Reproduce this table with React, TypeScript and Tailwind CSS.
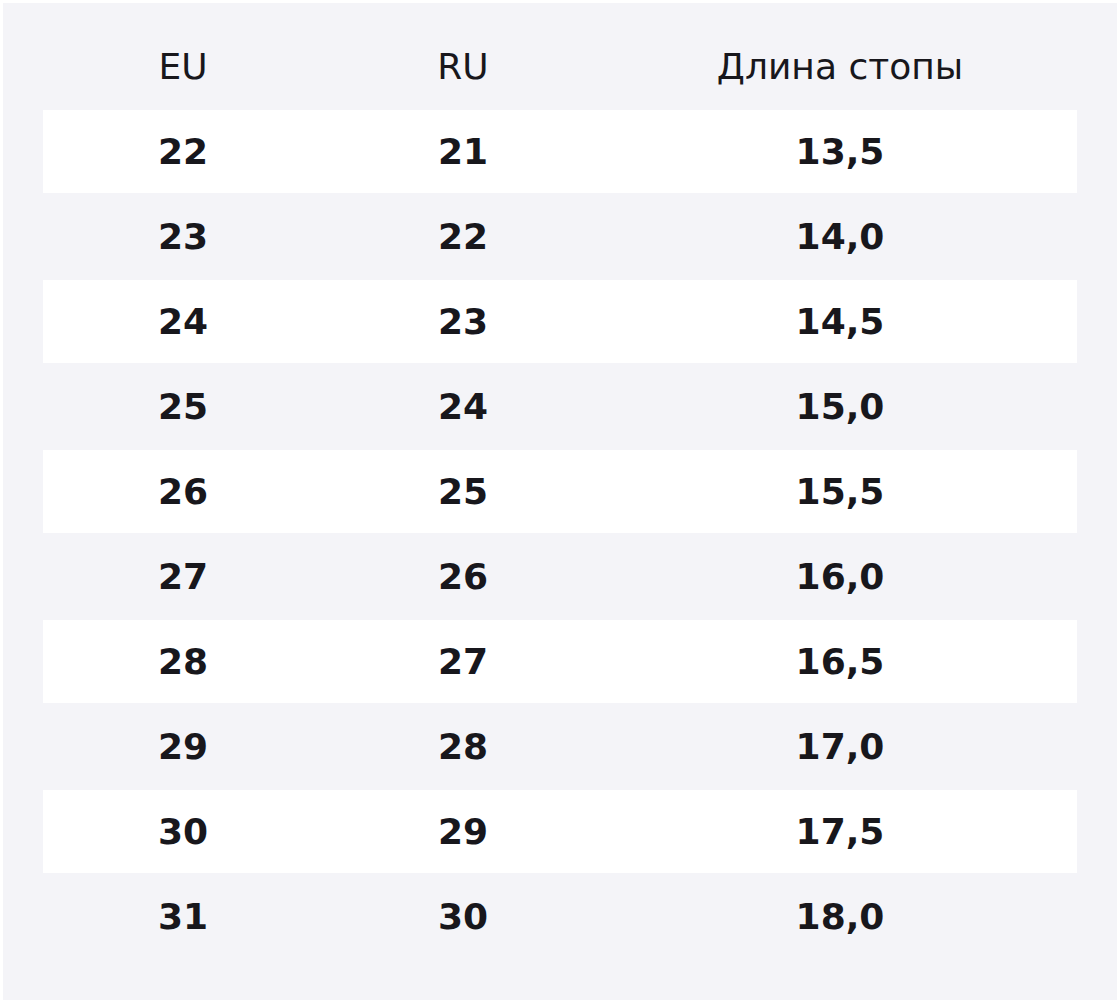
import React from 'react';

const sizes: [string, string, string][] = [
  ['22', '21', '13,5'],
  ['23', '22', '14,0'],
  ['24', '23', '14,5'],
  ['25', '24', '15,0'],
  ['26', '25', '15,5'],
  ['27', '26', '16,0'],
  ['28', '27', '16,5'],
  ['29', '28', '17,0'],
  ['30', '29', '17,5'],
  ['31', '30', '18,0'],
];

const cols = 'grid grid-cols-[280px_280px_1fr] items-center text-center';

const App: React.FC = () => {
  return (
    <div className="w-[1120px] h-[1003px] bg-white p-[3px] font-['DejaVu_Sans',sans-serif] text-[#18171c]">
      <div className="h-full bg-[#f4f4f8] px-10 pt-5 pb-10">
        <div className={`${cols} h-[87px] text-[36px] leading-none`}>
          <span>EU</span>
          <span>RU</span>
          <span>Длина стопы</span>
        </div>
        {sizes.map(([eu, ru, len], i) => (
          <div
            key={eu}
            className={`${cols} text-[36px] font-bold leading-none ${
              i % 2 === 0 ? 'h-[83px] bg-white' : 'h-[87px]'
            }`}
          >
            <span>{eu}</span>
            <span>{ru}</span>
            <span>{len}</span>
          </div>
        ))}
      </div>
    </div>
  );
};

export default App;
